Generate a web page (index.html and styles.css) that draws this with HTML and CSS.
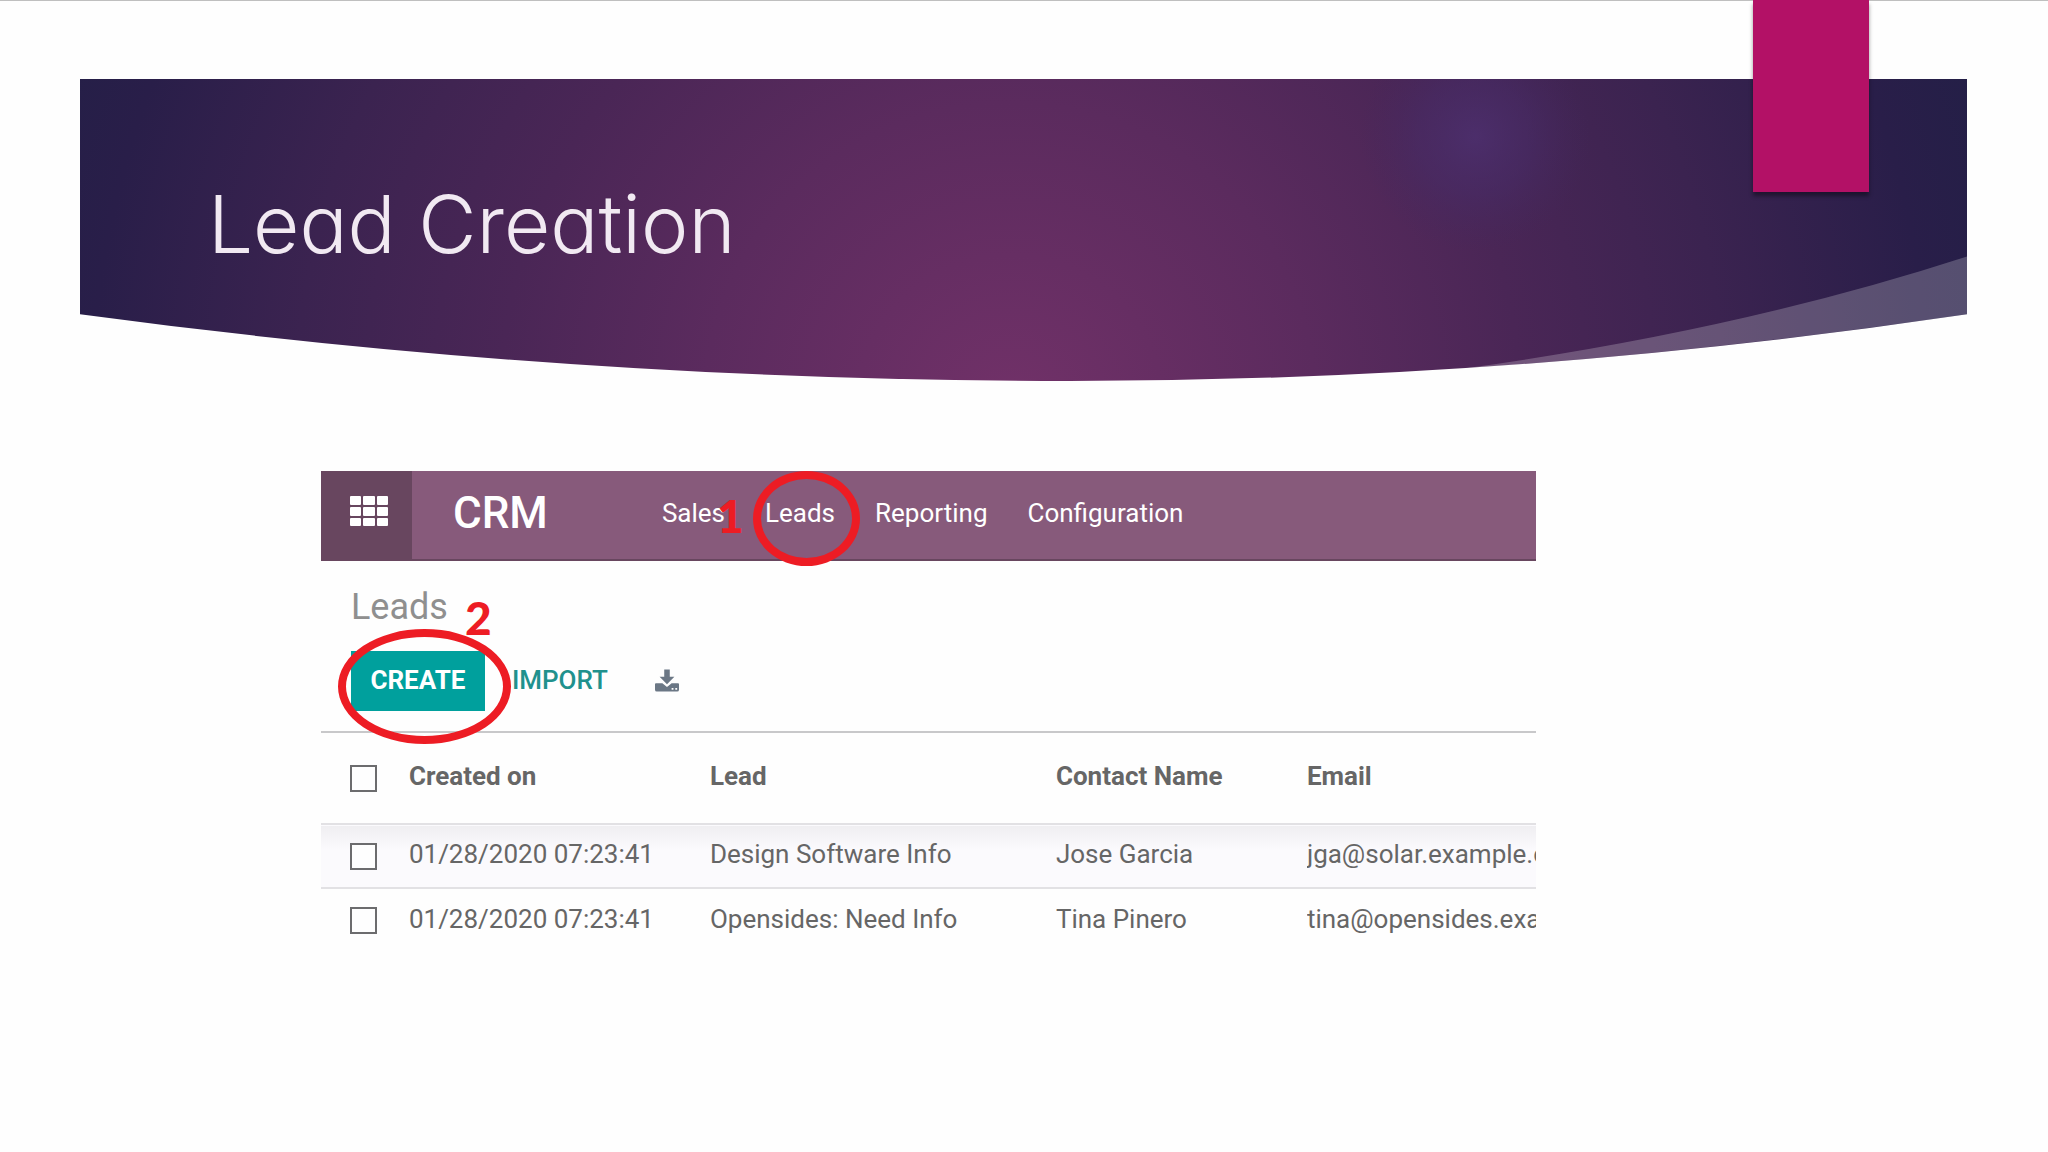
FILE: index.html
```html
<!DOCTYPE html>
<html lang="en">

<head>
  <meta charset="UTF-8">
  <meta name="viewport" content="width=device-width, initial-scale=1.0">
  <title>Lead Creation</title>
  <link rel="stylesheet" href="styles.css">
</head>

<body>
  <div class="ribbon"></div>

  <header class="banner">
    <svg class="banner-shape" viewBox="0 0 1887 303" preserveAspectRatio="none" aria-hidden="true">
      <defs>
        <radialGradient id="glow" gradientUnits="userSpaceOnUse" cx="930" cy="330" r="1020">
          <stop offset="0" stop-color="#713168" />
          <stop offset="0.3" stop-color="#5b2b5e" />
          <stop offset="0.5" stop-color="#4a2656" />
          <stop offset="0.7" stop-color="#3b2350" />
          <stop offset="0.9" stop-color="#291e49" />
          <stop offset="1" stop-color="#241f47" />
        </radialGradient>
        <radialGradient id="spot" gradientUnits="userSpaceOnUse" cx="1395" cy="58" r="115">
          <stop offset="0" stop-color="#4d3070" stop-opacity="0.8" />
          <stop offset="0.5" stop-color="#472c69" stop-opacity="0.5" />
          <stop offset="1" stop-color="#43285f" stop-opacity="0" />
        </radialGradient>
      </defs>
      <path d="M0 0H1887V236Q1438 303 990 303Q495 303 0 236Z" fill="url(#glow)" />
      <rect x="1275" y="0" width="240" height="180" fill="url(#spot)" />
      <path d="M1387 290Q1660 252 1887 178V236Q1620 275 1387 290Z" fill="#fff" fill-opacity="0.22" />
    </svg>
    <h1>Lead Creation</h1>
  </header>

  <main class="app">
    <nav class="navbar">
      <button type="button" class="apps" aria-label="Apps">
        <svg width="38" height="30" viewBox="0 0 38 30" fill="#fff">
          <rect x="0" y="0" width="11" height="9" rx="1" />
          <rect x="13" y="0" width="12" height="9" rx="1" />
          <rect x="27" y="0" width="11" height="9" rx="1" />
          <rect x="0" y="11" width="11" height="9" rx="1" />
          <rect x="13" y="11" width="12" height="9" rx="1" />
          <rect x="27" y="11" width="11" height="9" rx="1" />
          <rect x="0" y="22" width="11" height="8" rx="1" />
          <rect x="13" y="22" width="12" height="8" rx="1" />
          <rect x="27" y="22" width="11" height="8" rx="1" />
        </svg>
      </button>
      <a href="#" class="brand">CRM</a>
      <div class="menu">
        <a href="#">Sales</a>
        <a href="#">Leads</a>
        <a href="#">Reporting</a>
        <a href="#">Configuration</a>
        <span class="step step-one">1</span>
        <span class="ring ring-one"></span>
      </div>
    </nav>

    <section class="control-panel">
      <h2>Leads</h2>
      <div class="buttons">
        <button type="button" class="create">Create</button>
        <button type="button" class="import">Import</button>
        <button type="button" class="export" aria-label="Export">
          <svg width="24" height="23" viewBox="0 0 26 24" fill="#6b7785">
            <path d="M10 0H16V8H21L13 16L5 8H10Z" />
            <path d="M1 15H8L13 19L18 15H25Q26 15 26 16V22Q26 24 24 24H2Q0 24 0 22V16Q0 15 1 15ZM18 20V22H20V20ZM22 20V22H24V20Z" fill-rule="evenodd" />
          </svg>
        </button>
        <span class="step step-two">2</span>
        <span class="ring ring-two"></span>
      </div>
    </section>

    <table class="leads">
      <colgroup>
        <col class="col-check">
        <col class="col-date">
        <col class="col-lead">
        <col class="col-contact">
        <col>
      </colgroup>
      <thead>
        <tr>
          <th><input type="checkbox" aria-label="Select all"></th>
          <th>Created on</th>
          <th>Lead</th>
          <th>Contact Name</th>
          <th>Email</th>
        </tr>
      </thead>
      <tbody>
        <tr>
          <td><input type="checkbox" aria-label="Select Design Software Info"></td>
          <td>01/28/2020 07:23:41</td>
          <td>Design Software Info</td>
          <td>Jose Garcia</td>
          <td>jga@solar.example.com</td>
        </tr>
        <tr>
          <td><input type="checkbox" aria-label="Select Opensides: Need Info"></td>
          <td>01/28/2020 07:23:41</td>
          <td>Opensides: Need Info</td>
          <td>Tina Pinero</td>
          <td>tina@opensides.example.com</td>
        </tr>
      </tbody>
    </table>
  </main>
</body>

</html>
```

FILE: styles.css
```css
* {
  box-sizing: border-box;
}

body {
  margin: 0;
  padding: 78px 4% 0;
  border-top: 1px solid #bfbfbf;
  background-color: #fefefe;
  font-family: Roboto, "Liberation Sans", sans-serif;
  font-size: 26px;
  color: #666;
}

a {
  color: inherit;
  text-decoration: none;
}

button {
  border: none;
  padding: 0;
  background: none;
  font: inherit;
  cursor: pointer;
}

/* Banner */
.banner {
  display: grid;
  margin: 0 -1px 0 -2px;
}

.banner-shape,
.banner h1 {
  grid-area: 1 / 1;
}

.banner-shape {
  display: block;
  width: 100%;
  height: 302px;
}

.banner h1 {
  margin: 0;
  padding: 96px 128px 0;
  font-family: Inter, "Open Sans", sans-serif;
  font-feature-settings: "cv11";
  font-size: 80px;
  font-weight: 300;
  line-height: 98px;
  color: #f1e9f2;
}

.ribbon {
  position: absolute;
  top: 0;
  right: 179px;
  width: 116px;
  height: 192px;
  background-color: #b31166;
  box-shadow: 0 4px 4px rgba(0, 0, 0, 0.4);
}

/* CRM window */
.app {
  width: 64.5%;
  margin: 90px 0 0 239px;
}

.navbar {
  display: flex;
  height: 90px;
  background-color: #875a7b;
  border-bottom: 2px solid #68465f;
  color: #fff;
}

.apps {
  display: flex;
  justify-content: center;
  width: 91px;
  padding: 25px 0 0 6px;
  background-color: #68465f;
}

.brand {
  padding-left: 41px;
  width: 250px;
  font-size: 44px;
  font-weight: 500;
  line-height: 84px;
}

.menu {
  position: relative;
  display: flex;
  gap: 40px;
  line-height: 84px;
}

/* Red marks over the window */
.step {
  position: absolute;
  font-family: Lato, "Open Sans", sans-serif;
  font-size: 46px;
  font-weight: 900;
  line-height: 46px;
  color: #ed1c24;
}

.step-one {
  top: 22px;
  left: 55px;
}

.step-two {
  top: -56px;
  left: 114px;
}

.ring {
  position: absolute;
  border: 8px solid #ed1c24;
  border-radius: 50%;
  pointer-events: none;
}

.ring-one {
  top: 0;
  left: 91px;
  width: 107px;
  height: 95px;
}

.ring-two {
  top: -22px;
  left: -13px;
  width: 173px;
  height: 115px;
}

.control-panel {
  padding: 24px 30px 20px;
  border-bottom: 2px solid #c8c8ca;
}

.control-panel h2 {
  margin: 0 0 22px;
  font-size: 36px;
  font-weight: 400;
  line-height: 44px;
  color: #8f8f8f;
}

.buttons {
  position: relative;
  display: flex;
  align-items: center;
}

.create,
.import,
.export {
  height: 60px;
  padding-bottom: 2px;
  font-weight: 500;
  text-transform: uppercase;
}

.create {
  width: 134px;
  background-color: #00a09d;
  font-weight: 700;
  color: #fff;
}

.import {
  padding-left: 27px;
  padding-right: 47px;
  color: #20918d;
}

.export svg {
  display: block;
}

.leads {
  width: 100%;
  table-layout: fixed;
  border-collapse: collapse;
  text-align: left;
}

.col-check {
  width: 88px;
}

.col-date {
  width: 301px;
}

.col-lead {
  width: 346px;
}

.col-contact {
  width: 251px;
}

.leads th,
.leads td {
  height: 64px;
  padding: 0 0 4px;
  overflow: hidden;
  white-space: nowrap;
}

.leads th {
  height: 91px;
  font-weight: 700;
}

.leads tbody tr {
  border-top: 2px solid #e2e1e4;
}

.leads tbody tr:first-child {
  background: linear-gradient(#efeef1, #fbfafd 24px);
}

.leads input {
  appearance: none;
  display: block;
  width: 27px;
  height: 27px;
  margin: 4px 0 0 29px;
  border: 2px solid #6c6c6e;
  background-color: #fefefe;
}
```
